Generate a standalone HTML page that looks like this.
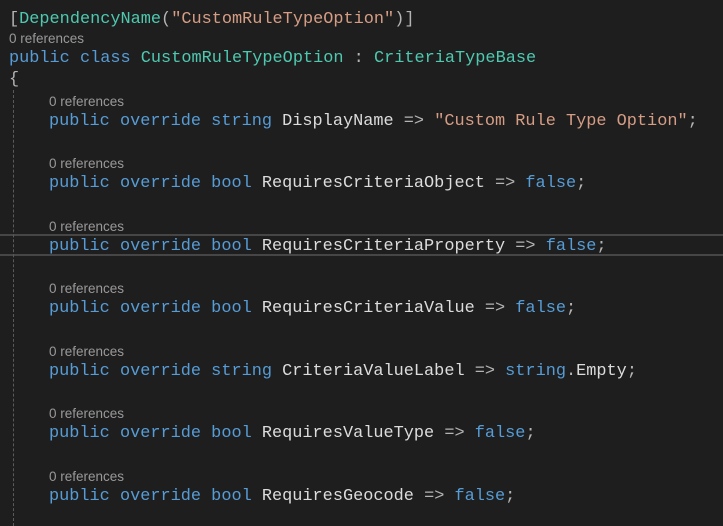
<!DOCTYPE html>
<html><head><meta charset="utf-8"><style>
html,body{margin:0;padding:0;background:#1e1e1e;width:723px;height:526px;overflow:hidden;position:relative}
.l{position:absolute;white-space:pre;font-family:"Liberation Mono",monospace;font-size:16.9px;line-height:20px;color:#dcdcdc;left:9px}
.r{position:absolute;white-space:pre;font-family:"Liberation Sans",sans-serif;font-size:13.5px;line-height:16px;color:#999;left:9px}
.i{left:49px}
.k{color:#569cd6}.t{color:#4ec9b0}.s{color:#d69d85}.p{color:#b4b4b4}
.hl{position:absolute;left:0;width:723px;top:234px;height:18px;border-top:2px solid #464646;border-bottom:2px solid #464646}
.g{position:absolute;left:13px;top:90px;height:436px;border-left:1px dashed #5a5a5a}
</style></head><body>
<div class="hl"></div>
<div class="g"></div>
<div class="l" style="top:10px"><span class="p">[</span><span class="t">DependencyName</span><span class="p">(</span><span class="s">"CustomRuleTypeOption"</span><span class="p">)]</span></div>
<div class="r" style="top:31px">0 references</div>
<div class="l" style="top:49px"><span class="k">public class</span> <span class="t">CustomRuleTypeOption</span> <span class="p">:</span> <span class="t">CriteriaTypeBase</span></div>
<div class="l" style="top:70px"><span class="p">{</span></div>

<div class="r i" style="top:94px">0 references</div>
<div class="l i" style="top:112px"><span class="k">public override string</span> DisplayName <span class="p">=&gt;</span> <span class="s">"Custom Rule Type Option"</span><span class="p">;</span></div>

<div class="r i" style="top:156px">0 references</div>
<div class="l i" style="top:174px"><span class="k">public override bool</span> RequiresCriteriaObject <span class="p">=&gt;</span> <span class="k">false</span><span class="p">;</span></div>

<div class="r i" style="top:219px">0 references</div>
<div class="l i" style="top:237px"><span class="k">public override bool</span> RequiresCriteriaProperty <span class="p">=&gt;</span> <span class="k">false</span><span class="p">;</span></div>

<div class="r i" style="top:281px">0 references</div>
<div class="l i" style="top:299px"><span class="k">public override bool</span> RequiresCriteriaValue <span class="p">=&gt;</span> <span class="k">false</span><span class="p">;</span></div>

<div class="r i" style="top:344px">0 references</div>
<div class="l i" style="top:362px"><span class="k">public override string</span> CriteriaValueLabel <span class="p">=&gt;</span> <span class="k">string</span><span class="p">.</span>Empty<span class="p">;</span></div>

<div class="r i" style="top:406px">0 references</div>
<div class="l i" style="top:424px"><span class="k">public override bool</span> RequiresValueType <span class="p">=&gt;</span> <span class="k">false</span><span class="p">;</span></div>

<div class="r i" style="top:469px">0 references</div>
<div class="l i" style="top:487px"><span class="k">public override bool</span> RequiresGeocode <span class="p">=&gt;</span> <span class="k">false</span><span class="p">;</span></div>
</body></html>
